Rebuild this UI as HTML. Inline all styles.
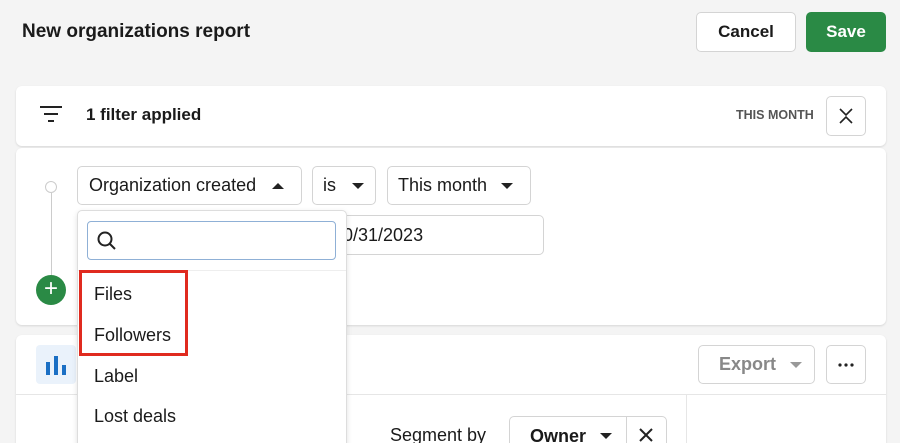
<!DOCTYPE html>
<html><head><style>
*{box-sizing:border-box;margin:0;padding:0}
html,body{width:900px;height:443px;overflow:hidden}
body{background:#f4f4f4;font-family:"Liberation Sans",sans-serif;color:#1a1a1a;position:relative}
.a{position:absolute}
.card{position:absolute;background:#fff;border-radius:6px;box-shadow:0 1px 2px rgba(0,0,0,.12)}
.btn{position:absolute;background:#fff;border:1px solid #d4d4d4;border-radius:5px;display:flex;align-items:center;font-size:18px}
.tri{display:inline-block;width:0;height:0;border-left:6px solid transparent;border-right:6px solid transparent;border-top:6px solid #222}
.triu{display:inline-block;width:0;height:0;border-left:6px solid transparent;border-right:6px solid transparent;border-bottom:6px solid #222}
.it{position:absolute;left:94px;font-size:18px}
</style></head><body>
<div class="a" style="left:22px;top:21px;font-size:19px;font-weight:bold">New organizations report</div>
<div class="btn" style="left:696px;top:12px;width:100px;height:40px;justify-content:center;font-weight:bold;font-size:17px">Cancel</div>
<div class="a" style="left:806px;top:12px;width:80px;height:40px;background:#2a8a45;border-radius:5px;color:#fff;font-weight:bold;font-size:17px;display:flex;align-items:center;justify-content:center">Save</div>

<div class="card" style="left:16px;top:86px;width:870px;height:60px"></div>
<svg class="a" style="left:40px;top:106px" width="22" height="16"><path d="M0 1h22M4 8h14M8 15h6" stroke="#222" stroke-width="2"/></svg>
<div class="a" style="left:86px;top:105px;font-size:17px;font-weight:bold">1 filter applied</div>
<div class="a" style="left:736px;top:108px;font-size:12.5px;font-weight:bold;color:#555">THIS MONTH</div>
<div class="btn" style="left:826px;top:96px;width:40px;height:40px;justify-content:center"><svg width="14" height="16"><path d="M1 1l6 6 6-6M1 15l6-6 6 6" stroke="#222" stroke-width="1.6" fill="none"/></svg></div>

<div class="card" style="left:16px;top:148px;width:870px;height:177px"></div>
<div class="a" style="left:45px;top:181px;width:12px;height:12px;border:1.5px solid #ccc;border-radius:50%"></div>
<div class="a" style="left:51px;top:193px;width:1px;height:82px;background:#ccc"></div>
<div class="a" style="left:36px;top:275px;width:30px;height:30px;border-radius:50%;background:#2a8a45;color:#fff;font-size:24px;line-height:28px;text-align:center">+</div>
<div class="btn" style="left:77px;top:166px;width:225px;height:39px;padding-left:11px">Organization created<span class="triu" style="margin-left:16px"></span></div>
<div class="btn" style="left:312px;top:166px;width:64px;height:39px;padding-left:10px">is<span class="tri" style="margin-left:16px"></span></div>
<div class="btn" style="left:387px;top:166px;width:144px;height:39px;padding-left:10px">This month<span class="tri" style="margin-left:14px"></span></div>
<div class="btn" style="left:300px;top:215px;width:244px;height:40px;padding-left:42px">0/31/2023</div>

<div class="card" style="left:16px;top:335px;width:870px;height:120px"></div>
<div class="a" style="left:16px;top:394px;width:870px;height:1px;background:#e6e6e6"></div>
<div class="a" style="left:686px;top:394px;width:1px;height:60px;background:#e6e6e6"></div>
<div class="a" style="left:36px;top:345px;width:40px;height:39px;background:#eaf2fb;border-radius:4px"></div>
<svg class="a" style="left:45px;top:354px" width="22" height="22"><rect x="1" y="8" width="4" height="13" fill="#1a6fc4"/><rect x="9" y="2" width="4" height="19" fill="#1a6fc4"/><rect x="17" y="11" width="4" height="10" fill="#1a6fc4"/></svg>
<div class="btn" style="left:698px;top:345px;width:117px;height:39px;padding-left:20px;color:#888;font-weight:bold">Export<span class="tri" style="margin-left:14px;border-top-color:#999"></span></div>
<div class="btn" style="left:826px;top:345px;width:40px;height:39px;justify-content:center"><svg width="16" height="4"><circle cx="2" cy="2" r="1.6" fill="#222"/><circle cx="8" cy="2" r="1.6" fill="#222"/><circle cx="14" cy="2" r="1.6" fill="#222"/></svg></div>
<div class="a" style="left:390px;top:425px;font-size:18px">Segment by</div>
<div class="btn" style="left:509px;top:416px;width:158px;height:40px;padding-left:20px;font-weight:bold">Owner<span class="tri" style="margin-left:14px"></span></div>
<div class="a" style="left:626px;top:416px;width:1px;height:30px;background:#d4d4d4"></div>
<svg class="a" style="left:639px;top:428px" width="14" height="14"><path d="M1 1l12 12M13 1L1 13" stroke="#222" stroke-width="2"/></svg>

<div class="a" style="left:77px;top:210px;width:270px;height:250px;background:#fff;border:1px solid #ddd;border-radius:5px;box-shadow:0 2px 6px rgba(0,0,0,.12)"></div>
<div class="a" style="left:87px;top:221px;width:249px;height:39px;border:1.5px solid #8fb0d6;border-radius:4px"></div>
<svg class="a" style="left:97px;top:231px" width="20" height="20"><circle cx="8" cy="8" r="6.5" stroke="#222" stroke-width="2" fill="none"/><path d="M13 13l5 5" stroke="#222" stroke-width="2"/></svg>
<div class="a" style="left:78px;top:270px;width:268px;height:1px;background:#eee"></div>
<div class="it" style="top:284px">Files</div>
<div class="it" style="top:325px">Followers</div>
<div class="it" style="top:366px">Label</div>
<div class="it" style="top:406px">Lost deals</div>
<div class="a" style="left:79px;top:270px;width:109px;height:86px;border:3px solid #e02a1f"></div>
</body></html>
